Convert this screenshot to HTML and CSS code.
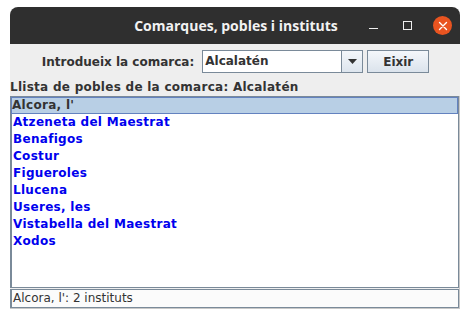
FILE: index.html
```html
<!DOCTYPE html>
<html lang="ca">

<head>
  <meta charset="UTF-8">
  <title>Comarques, pobles i instituts</title>
  <link rel="stylesheet" href="styles.css">
</head>

<body>
  <div class="window">
    <div class="titlebar">
      <span class="title">Comarques, pobles i instituts</span>
      <div class="controls">
        <span class="minimize"></span>
        <span class="maximize"></span>
        <span class="close">
          <svg width="10" height="10" viewBox="0 0 10 10">
            <path d="M1.5 1.5 L8.5 8.5 M8.5 1.5 L1.5 8.5" stroke="#fff" stroke-width="1.4" stroke-linecap="round" />
          </svg>
        </span>
      </div>
    </div>
    <div class="content">
      <div class="toprow">
        <label class="prompt">Introdueix la comarca:</label>
        <div class="combo">
          <span class="comboText">Alcalatén</span>
          <span class="comboArrow">
            <svg width="9" height="5" viewBox="0 0 9 5">
              <path d="M0 0 L9 0 L4.5 5 Z" fill="#333" />
            </svg>
          </span>
        </div>
        <button class="exit">Eixir</button>
      </div>
      <div class="listTitle">Llista de pobles de la comarca: Alcalatén</div>
      <div class="listPanel">
        <ul class="towns">
          <li class="selected">Alcora, l'</li>
          <li>Atzeneta del Maestrat</li>
          <li>Benafigos</li>
          <li>Costur</li>
          <li>Figueroles</li>
          <li>Llucena</li>
          <li>Useres, les</li>
          <li>Vistabella del Maestrat</li>
          <li>Xodos</li>
        </ul>
        <div class="status">Alcora, l': 2 instituts</div>
      </div>
    </div>
  </div>
</body>

</html>
```

FILE: styles.css
```css
* {
  padding: 0;
  margin: 0;
  box-sizing: border-box;
}

body {
  background-color: #fff;
  font-family: "DejaVu Sans", sans-serif;
}

.window {
  width: 450px;
  height: 302px;
  margin: 7px 0 0 10px;
  display: flex;
  flex-direction: column;
}

.titlebar {
  height: 37px;
  background-color: #2f2f2f;
  border-radius: 8px 8px 0 0;
  position: relative;
  display: flex;
  align-items: center;
  justify-content: center;
}

.title {
  font-family: "Open Sans", sans-serif;
  font-weight: bold;
  font-size: 14px;
  color: #f2f2f2;
  margin-left: 2px;
}

.controls {
  position: absolute;
  right: 8px;
  top: 9px;
  display: flex;
  align-items: center;
}

.minimize {
  width: 9px;
  height: 1.5px;
  background-color: #eee;
  margin-top: 6px;
}

.maximize {
  width: 9px;
  height: 9px;
  border: 1.5px solid #eee;
  margin-left: 25px;
}

.close {
  width: 19px;
  height: 19px;
  border-radius: 50%;
  background-color: #e95420;
  margin-left: 21px;
  display: flex;
  align-items: center;
  justify-content: center;
}

.content {
  flex: 1;
  background-color: #eeeeee;
  display: flex;
  flex-direction: column;
  color: #333;
  font-size: 12px;
}

.toprow {
  display: flex;
  justify-content: center;
  align-items: center;
  height: 23px;
  margin-top: 6px;
}

.prompt {
  font-weight: bold;
  margin-right: 8px;
  margin-left: 1px;
}

.combo {
  width: 161px;
  height: 23px;
  display: flex;
  border: 1px solid #7a8a99;
  background-color: #fff;
  margin-right: 4px;
}

.comboText {
  flex: 1;
  font-weight: bold;
  padding: 3px 0 0 2px;
  border-right: 1px solid #7a8a99;
}

.comboArrow {
  width: 20px;
  display: flex;
  align-items: center;
  justify-content: center;
  background: linear-gradient(#f4f7fa, #dde5ee);
}

.exit {
  width: 62px;
  height: 23px;
  border: 1px solid #7a8a99;
  background: linear-gradient(#f4f7fb, #dbe3ec);
  font-family: "DejaVu Sans", sans-serif;
  font-weight: bold;
  font-size: 12px;
  color: #333;
}

.listTitle {
  font-weight: bold;
  height: 18px;
  line-height: 18px;
  margin-top: 5px;
  letter-spacing: 0.27px;
}

.listPanel {
  flex: 1;
  border-right: 1px solid #c8c8c8;
  border-bottom: 1px solid #c8c8c8;
  display: flex;
  flex-direction: column;
}

.towns {
  flex: 1;
  list-style: none;
  background-color: #fff;
  border: 1px solid #7a8a99;
  border-left: 2px solid #7a8a99;
}

.towns li {
  height: 17px;
  line-height: 17px;
  padding-left: 1px;
  font-weight: bold;
  color: #0000ee;
  letter-spacing: 0.3px;
}

.towns li.selected {
  color: #333;
  background-color: #b8cfe5;
  border: 1px solid #6382bf;
  line-height: 15px;
  padding-left: 0;
  margin-left: -1px;
}

.status {
  height: 19px;
  line-height: 17px;
  margin-top: 1px;
  padding-left: 1px;
  border: 1px solid #7a8a99;
  border-left: 2px solid #7a8a99;
  background-color: #fbfbfb;
}
```
